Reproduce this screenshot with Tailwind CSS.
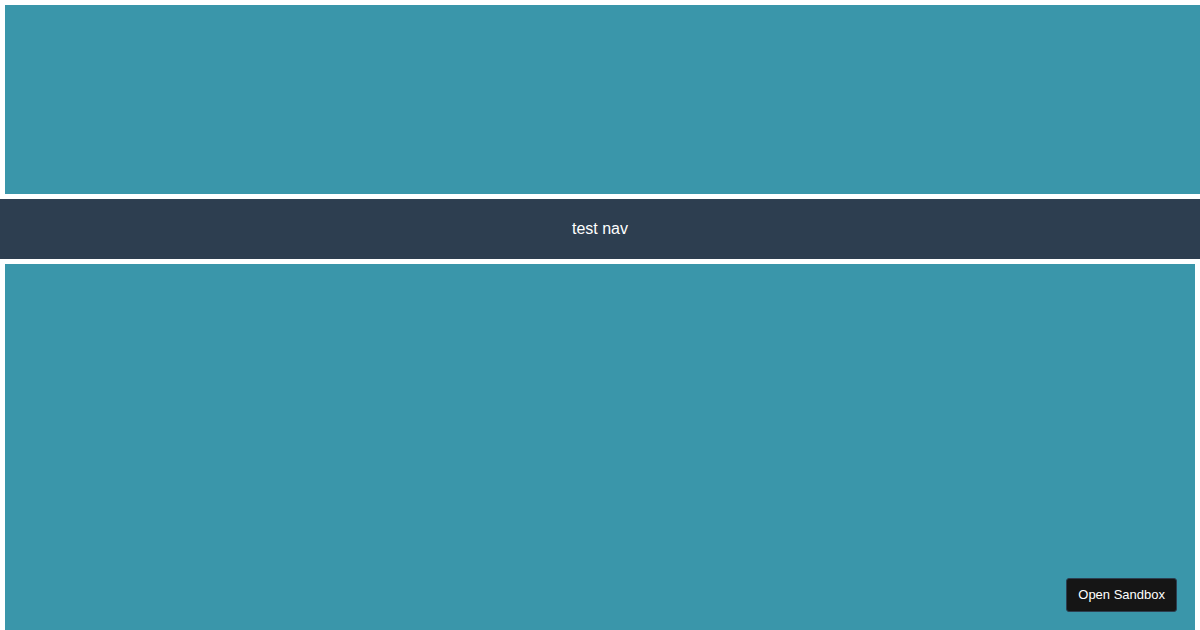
<!DOCTYPE html>
<html lang="en">
<head>
  <meta charset="UTF-8">
  <meta name="viewport" content="width=device-width, initial-scale=1.0">
  <title>Sticky Nav</title>
  <script src="https://cdn.jsdelivr.net/npm/@tailwindcss/browser@4"></script>
</head>
<body class="bg-white min-h-screen overflow-hidden font-['Liberation_Sans',Arial,sans-serif]">

  <div class="flex flex-col h-screen">
    <header class="h-[30%] ml-[5px] my-[5px] shrink-0 bg-[#3a96aa]"></header>

    <nav class="flex items-center justify-center h-[60px] shrink-0 bg-[#2d3e50] text-white text-base">test nav</nav>

    <main class="grow mx-[5px] mt-[5px] bg-[#3a96aa]"></main>
  </div>

  <button type="button" class="fixed right-[23px] bottom-[18px] h-[34px] px-[11px] rounded-[3px] border border-[#2d3e50] bg-[#151515] text-white text-[13px]">Open Sandbox</button>

</body>
</html>
